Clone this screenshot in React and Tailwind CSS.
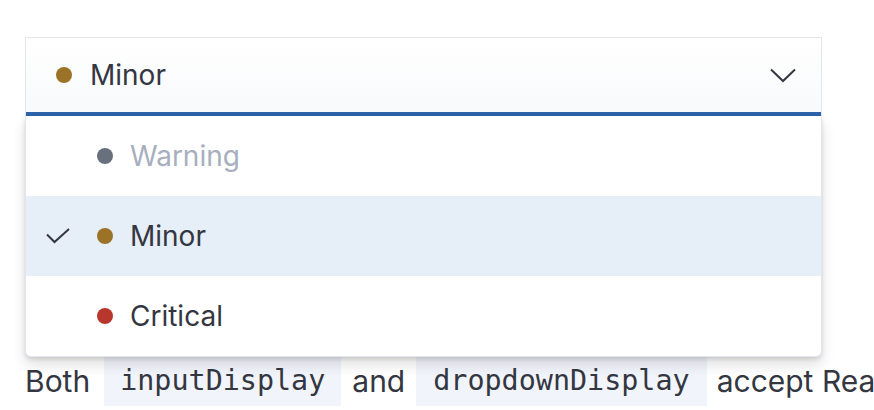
import React from "react";

const options = [
  { value: "warning", label: "Warning", dot: "bg-[#69707d]", disabled: true },
  { value: "minor", label: "Minor", dot: "bg-[#9b7327]" },
  { value: "critical", label: "Critical", dot: "bg-[#b8372c]" },
];

const Check = () => (
  <svg width="24" height="16" viewBox="0 0 24 16" fill="none">
    <path d="M1 6.5 L8.5 14 L23 1" stroke="#343741" strokeWidth="2" strokeLinejoin="miter" />
  </svg>
);

const Chevron = () => (
  <svg width="26" height="15" viewBox="0 0 26 15" fill="none">
    <path d="M1 1.5 L13 13 L25 1.5" stroke="#343741" strokeWidth="2" />
  </svg>
);

const App = () => {
  const selected = "minor";
  const current = options.find((o) => o.value === selected);

  return (
    <div className="min-h-screen overflow-hidden bg-white pl-[25px] pt-[37px] font-['Inter',sans-serif] text-[#343741]">
      <div className="relative w-[797px]">
        {/* select control */}
        <div className="flex h-[79px] flex-col border border-b-0 border-[#e3e6ec] bg-gradient-to-b from-white to-[#f8f9fb]">
          <div className="flex flex-1 items-center pl-[30px] pr-[25px]">
            <span className={`h-[16px] w-[16px] rounded-full ${current.dot}`}></span>
            <span className="ml-[18px] text-[28px] leading-none">{current.label}</span>
            <span className="ml-auto flex">
              <Chevron />
            </span>
          </div>
          <div className="h-[4px] bg-[#2c63a9]"></div>
        </div>

        {/* options list */}
        <div className="absolute left-0 top-full z-10 w-full overflow-hidden rounded-b-[6px] border-x border-b border-[#e3e6ec] bg-white shadow-[0_8px_14px_rgba(0,0,0,0.12),0_2px_4px_rgba(0,0,0,0.12)]">
          {options.map((option) => (
            <div
              key={option.value}
              className={`flex h-[80px] items-center pl-[20px] ${
                option.value === selected ? "bg-[#e6eef7]" : ""
              }`}
            >
              <span className="flex w-[24px] justify-center">
                {option.value === selected && <Check />}
              </span>
              <span className={`ml-[27px] h-[16px] w-[16px] rounded-full ${option.dot}`}></span>
              <span
                className={`ml-[17px] text-[28px] leading-none ${
                  option.disabled ? "text-[#a7afbe]" : "text-[#343741]"
                }`}
              >
                {option.label}
              </span>
            </div>
          ))}
        </div>
      </div>

      <p className="mt-[240px] flex items-center whitespace-nowrap text-[30px]">
        <span>Both</span>
        <code className="ml-[14px] h-[50px] bg-[#f1f4fa] px-[16px] font-['DejaVu_Sans_Mono',monospace] text-[28.4px] leading-[50px]">
          inputDisplay
        </code>
        <span className="ml-[11px]">and</span>
        <code className="ml-[11px] h-[50px] bg-[#f1f4fa] px-[17px] font-['DejaVu_Sans_Mono',monospace] text-[28.4px] leading-[50px]">
          dropdownDisplay
        </code>
        <span className="ml-[10px]">accept React</span>
      </p>
    </div>
  );
};

export default App;
